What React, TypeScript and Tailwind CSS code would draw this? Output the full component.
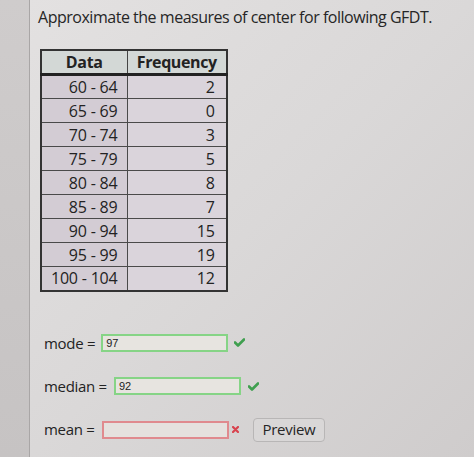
import React from "react";

const rows: [string, string][] = [
  ["60 - 64", "2"],
  ["65 - 69", "0"],
  ["70 - 74", "3"],
  ["75 - 79", "5"],
  ["80 - 84", "8"],
  ["85 - 89", "7"],
  ["90 - 94", "15"],
  ["95 - 99", "19"],
  ["100 - 104", "12"],
];

function Check() {
  return (
    <svg width="11" height="9" viewBox="0 0 11 9" className="shrink-0">
      <path d="M1 4.5 L4 7.5 L10 1.5" fill="none" stroke="#3f9f4f" strokeWidth="2.6" strokeLinecap="round" strokeLinejoin="round" />
    </svg>
  );
}

function Cross() {
  return (
    <svg width="7" height="7" viewBox="0 0 7 7" className="shrink-0">
      <path d="M1 1 L6 6 M6 1 L1 6" fill="none" stroke="#d8434e" strokeWidth="2.2" strokeLinecap="round" />
    </svg>
  );
}

export default function App() {
  return (
    <div className="flex w-[474px] h-[457px] overflow-hidden font-['Open_Sans',sans-serif] text-[#232323]">
      {/* outer page margin */}
      <div className="w-[30px] shrink-0 bg-gradient-to-b from-[#cfcccc] to-[#c6c3c3] border-r border-[#a9a6a6]" />

      <div className="flex-1 flex flex-col pl-[8px] pt-[5px] bg-gradient-to-br from-[#e3e1e1] via-[#dad8d8] to-[#cfcccc]">
        <p className="text-[16px] leading-[24px] tracking-[-0.48px] text-[#262626]">
          Approximate the measures of center for following GFDT.
        </p>

        <table className="mt-[20px] ml-[2px] w-[188px] border-collapse border-2 border-[#333] text-[16px] leading-[22px]">
          <thead>
            <tr className="bg-[#d3d8d6] border-b-[3px] border-[#222]">
              <th className="w-[86px] h-[24px] font-bold text-center border-r border-[#444] tracking-[-0.3px]">Data</th>
              <th className="h-[24px] font-bold text-center tracking-[-0.4px]">Frequency</th>
            </tr>
          </thead>
          <tbody>
            {rows.map(([d, f]) => (
              <tr key={d} className="border-b border-[#4a4a4a]">
                <td className="h-[24px] text-right pr-[9px] bg-[#d3ccd4] border-r border-[#4a4a4a] tracking-[-0.2px]">{d}</td>
                <td className="h-[24px] text-right pr-[11px] bg-[#dad4db]">{f}</td>
              </tr>
            ))}
          </tbody>
        </table>

        <div className="mt-[40px] ml-[6px] flex items-center gap-[6px] text-[15px] tracking-[-0.3px]">
          <span>mode =</span>
          <div className="w-[127px] h-[18px] border-2 border-[#86d486] bg-[#e7e4e0] flex items-center pl-[3px] text-[11px] tracking-normal font-['Liberation_Sans',sans-serif] text-[#222]">
            97
          </div>
          <Check />
        </div>

        <div className="mt-[21px] ml-[6px] flex items-center gap-[7px] text-[15px] tracking-[-0.3px]">
          <span>median =</span>
          <div className="w-[127px] h-[18px] border-2 border-[#86d486] bg-[#e7e4e0] flex items-center pl-[3px] text-[11px] tracking-normal font-['Liberation_Sans',sans-serif] text-[#222]">
            92
          </div>
          <Check />
        </div>

        <div className="mt-[20px] ml-[6px] flex items-center text-[15px] tracking-[-0.3px]">
          <span className="mr-[7px]">mean =</span>
          <div className="w-[127px] h-[18px] border-2 border-[#e08a8e] bg-[#e5e1de]" />
          <span className="ml-[3px]"><Cross /></span>
          <button className="ml-[14px] h-[24px] px-[9px] rounded-[4px] border border-[#b8b6b6] bg-[#d9d7d7] text-[15px] leading-none text-[#262626]">
            Preview
          </button>
        </div>
      </div>
    </div>
  );
}
